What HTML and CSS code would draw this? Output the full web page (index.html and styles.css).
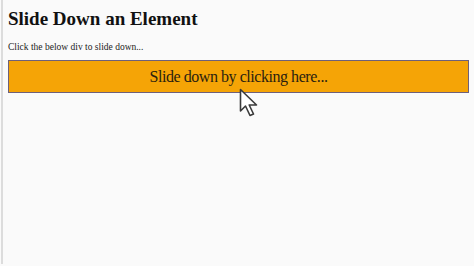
FILE: index.html
```html
<!DOCTYPE html>
<html>
<head>
<meta charset="utf-8">
<link rel="stylesheet" href="styles.css">
</head>
<body>
<div class="frame">
  <h1 class="title">Slide Down an Element</h1>
  <p class="hint">Click the below div to slide down...</p>
  <div class="slider">Slide down by clicking here...</div>
</div>
<svg class="cursor" width="20" height="30" viewBox="0 0 20 30">
  <path d="M1.5 1.5 L1.5 23 L6.5 18 L11 27.5 L14.5 26 L10.2 17 L17.5 17 Z" fill="#fff" stroke="#3a3a3a" stroke-width="1.6" stroke-linejoin="round"/>
</svg>
</body>
</html>
```
FILE: styles.css
```css
html, body {
  margin: 0;
  padding: 0;
  background: #fafafa;
  height: 100%;
}
body {
  font-family: "Liberation Serif", "Times New Roman", serif;
  color: #111;
  position: relative;
}
.frame {
  height: 264px;
  box-sizing: border-box;
  border-left: 2px solid #dcdcdc;
  margin-left: 1px;
  padding: 7px 5px 0 5px;
}
.title {
  margin: 0;
  font-size: 19px;
  font-weight: bold;
  line-height: 24px;
}
.hint {
  margin: 10px 0 0 0;
  font-size: 9.5px;
  line-height: 12px;
  color: #222;
}
.slider {
  margin-top: 7px;
  height: 33px;
  box-sizing: border-box;
  border: 1px solid #6e607a;
  background: #f5a406;
  text-align: center;
  font-size: 16px;
  letter-spacing: -0.45px;
  line-height: 31px;
  color: #2a1e10;
}
.cursor {
  position: absolute;
  left: 239px;
  top: 88px;
}
```
